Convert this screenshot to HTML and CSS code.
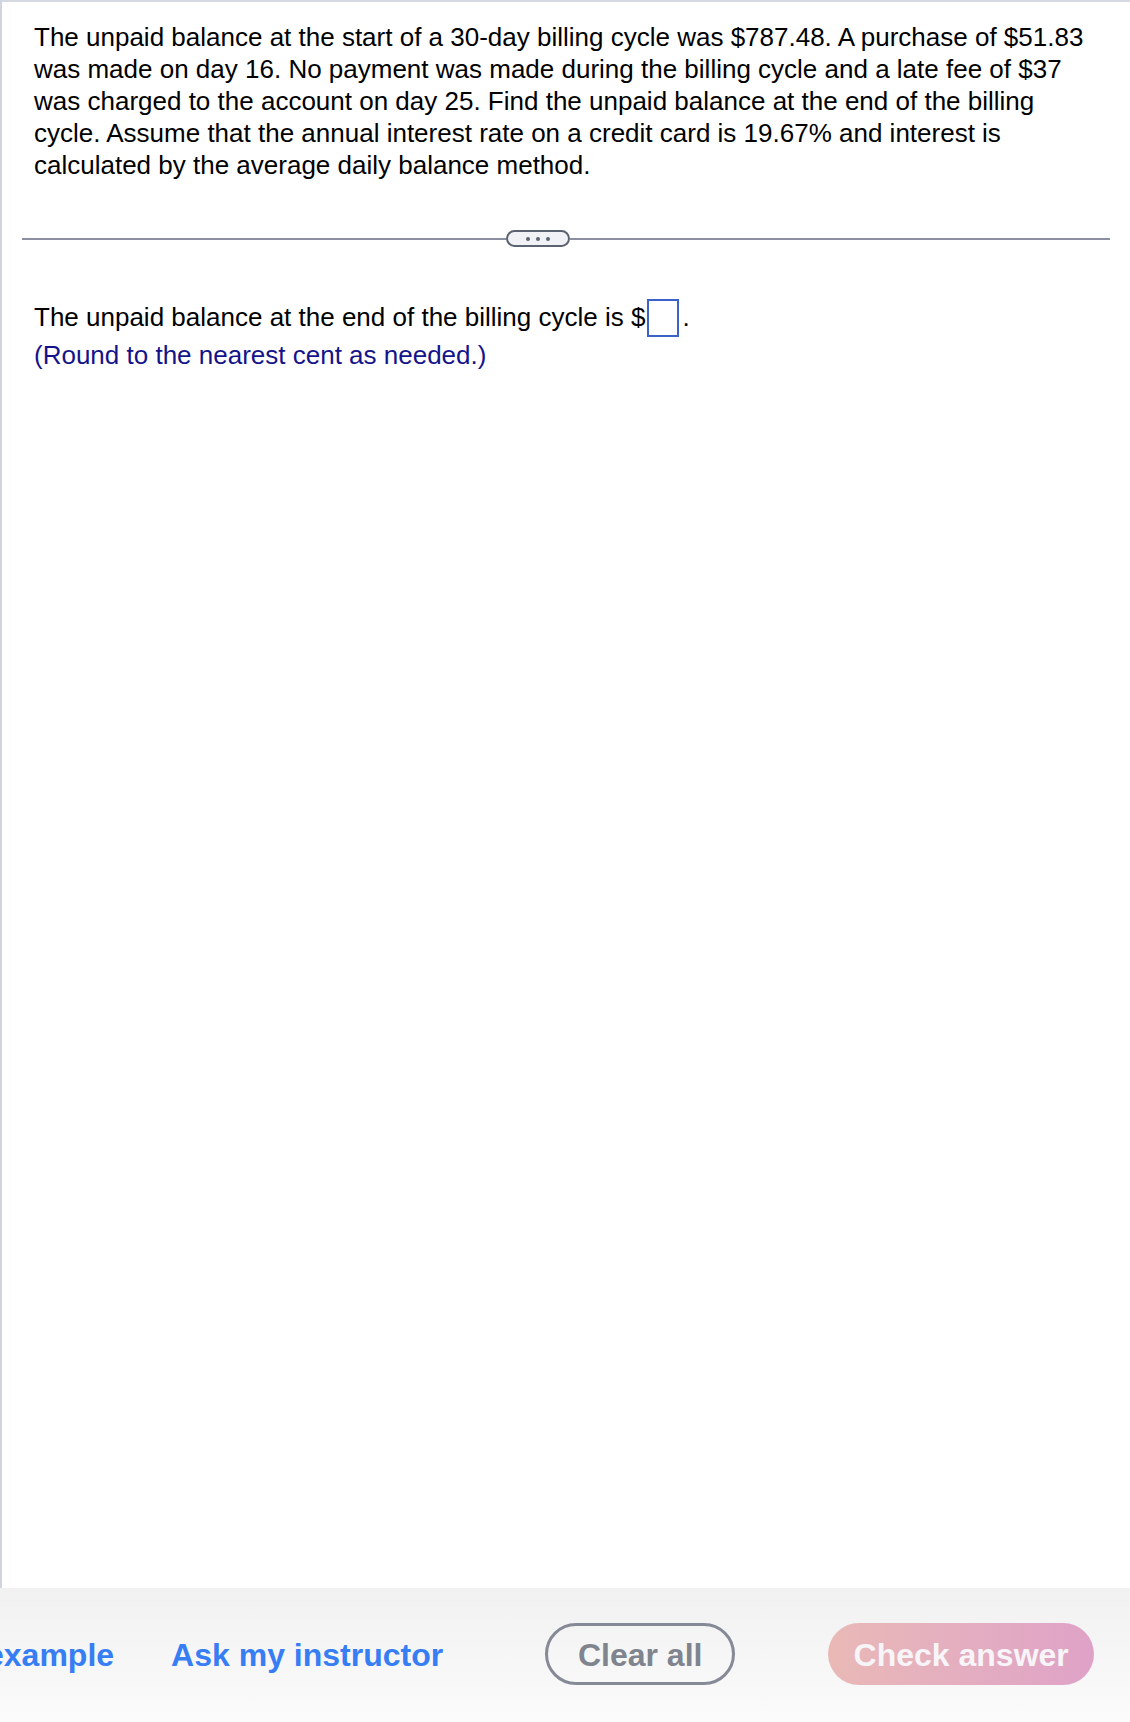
FILE: index.html
```html
<!DOCTYPE html>
<html lang="en">
<head>
<meta charset="utf-8">
<title>Unpaid balance question</title>
<link rel="stylesheet" href="styles.css">
</head>
<body>
<div class="page">
  <main class="main">
    <div class="question">
      <p class="stem">The unpaid balance at the start of a 30-day billing cycle was $787.48. A purchase of $51.83 was made on day 16. No payment was made during the billing cycle and a late fee of $37 was charged to the account on day 25. Find the unpaid balance at the end of the billing cycle. Assume that the annual interest rate on a credit card is 19.67% and interest is calculated by the average daily balance method.</p>
    </div>
    <div class="divider">
      <span class="line line-left"></span>
      <span class="pill"><i class="dot"></i><i class="dot"></i><i class="dot"></i></span>
      <span class="line line-right"></span>
    </div>
    <div class="answer">
      <p class="answer-line">The unpaid balance at the end of the billing cycle is $<span class="answer-box"></span>.</p>
      <p class="hint">(Round to the nearest cent as needed.)</p>
    </div>
  </main>
  <footer class="footer">
    <a class="link link-example">example</a>
    <a class="link link-ask">Ask my instructor</a>
    <button class="btn btn-clear">Clear all</button>
    <button class="btn btn-check">Check answer</button>
  </footer>
</div>
</body>
</html>
```
FILE: styles.css
```css
html, body {
  margin: 0;
  padding: 0;
  background: #ffffff;
}

body {
  font-family: "Liberation Sans", Arial, Helvetica, sans-serif;
  color: #000000;
}

.page {
  width: 1130px;
  height: 1722px;
  display: flex;
  flex-direction: column;
  overflow: hidden;
}

.main {
  flex: 1;
  border-top: 2px solid #d4d8e1;
  border-left: 2px solid #d0d4de;
  background: #ffffff;
}

.question {
  padding: 19px 40px 0 32px;
}

.stem {
  margin: 0;
  font-size: 26px;
  line-height: 32px;
  max-width: 1070px;
}

.divider {
  display: flex;
  align-items: center;
  margin: 49px 20px 0 20px;
  height: 17px;
}

.line {
  height: 2px;
  background: #8b8f9f;
}

.line-left {
  width: 484px;
}

.line-right {
  flex: 1;
}

.pill {
  box-sizing: border-box;
  width: 64px;
  height: 17px;
  border: 2px solid #5c6370;
  border-radius: 9px;
  background: #f0f2f5;
  display: flex;
  align-items: center;
  justify-content: center;
  gap: 6px;
}

.dot {
  display: block;
  width: 4px;
  height: 4px;
  border-radius: 50%;
  background: #5c6370;
}

.answer {
  padding: 52px 30px 0 32px;
}

.answer-line {
  margin: 0;
  font-size: 26px;
  line-height: 32px;
}

.answer-box {
  display: inline-block;
  box-sizing: border-box;
  width: 32px;
  height: 38px;
  border: 2px solid #3b63c7;
  vertical-align: -11px;
  margin: 0 3px 0 2px;
  background: #ffffff;
}

.hint {
  margin: 2px 0 0 0;
  font-size: 26px;
  line-height: 32px;
  color: #14148a;
}

.footer {
  height: 134px;
  flex: none;
  display: flex;
  align-items: center;
  background: linear-gradient(180deg, #f1f1f1 0%, #fbfbfb 100%);
  overflow: hidden;
  font-family: "Liberation Sans", Arial, Helvetica, sans-serif;
  font-weight: bold;
  font-size: 32px;
}

.link {
  color: #377df4;
  white-space: nowrap;
  line-height: 38px;
}

.link-example {
  margin-left: -14px;
}

.link-ask {
  margin-left: 57px;
}

.btn {
  font-family: inherit;
  font-weight: bold;
  font-size: 32px;
  border-radius: 32px;
  white-space: nowrap;
  box-sizing: border-box;
  height: 62px;
  margin-top: -3px;
  padding: 3px 0 0 0;
  cursor: pointer;
}

.btn-clear {
  margin-left: 102px;
  width: 190px;
  border: 3px solid #868a96;
  background: transparent;
  color: #80848f;
}

.btn-check {
  margin-left: 93px;
  width: 266px;
  border: none;
  background: linear-gradient(90deg, #e9b9b6 0%, #e4aec0 50%, #dfa2c7 100%);
  color: #f8f5f8;
}
```
